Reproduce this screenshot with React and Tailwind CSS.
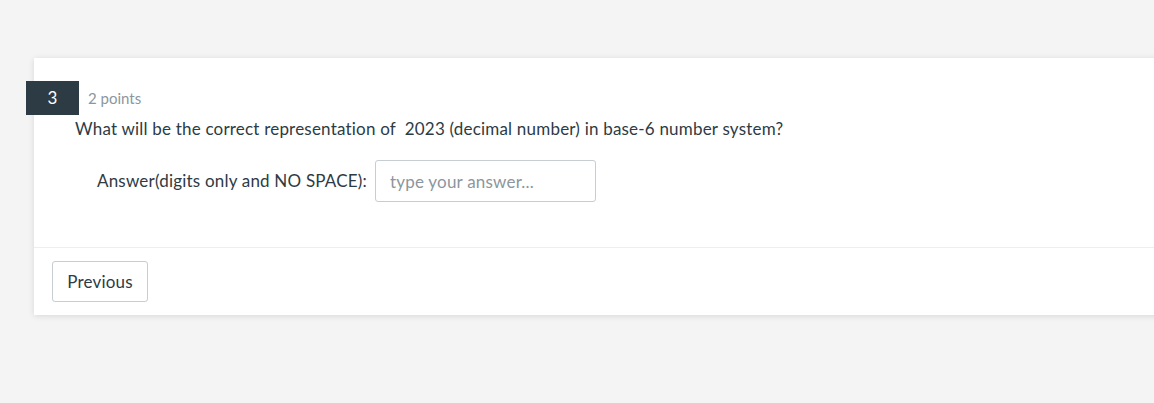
const App = () => {
  return (
    <div
      className="h-[403px] w-full overflow-hidden bg-[#f4f4f4] pt-[58px] pl-[34px] [font-variant-ligatures:none]"
      style={{ fontFamily: 'Lato, "Open Sans", sans-serif' }}
    >
      <div className="w-[1160px] bg-white shadow-[0_1px_6px_rgba(0,0,0,0.12)]">
        <div className="pt-[23px] pb-[45px]">
          <div className="flex items-center">
            <div className="-ml-2 flex h-[34px] w-[53px] items-center justify-center bg-[#2d3b45] text-[17px] text-white">3</div>
            <span className="ml-[9px] text-[15px] text-[#8b969e]">2 points</span>
          </div>
          <p className="ml-[41px] mt-[2px] text-[17px] leading-6 tracking-[0.2px] text-[#2d3b45]">
            What will be the correct representation of&nbsp; 2023 (decimal number) in base-6 number system?
          </p>
          <div className="mt-[19px] ml-[63px] flex items-center gap-2">
            <label className="text-[17px] tracking-[0.2px] text-[#2d3b45]">Answer(digits only and NO SPACE):</label>
            <input
              type="text"
              placeholder="type your answer..."
              className="h-[42px] w-[221px] rounded-[3px] border border-[#c7cdd1] px-[14px] text-[17px] tracking-[0.2px] text-[#2d3b45] placeholder:text-[#8b969e] outline-none"
            />
          </div>
        </div>
        <div className="border-t border-[#eeeeee] px-[18px] pt-[13px] pb-[13px]">
          <button className="h-[41px] w-[96px] rounded-[3px] border border-[#c7cdd1] bg-white text-[17px] tracking-[0.2px] text-[#2d3b45]">
            Previous
          </button>
        </div>
      </div>
    </div>
  );
};

export default App;
